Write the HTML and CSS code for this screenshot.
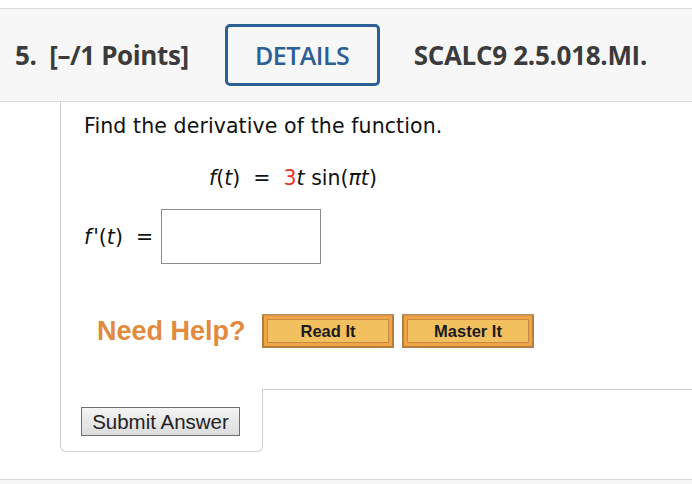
FILE: index.html
```html
<!DOCTYPE html>
<html>
<head>
<meta charset="utf-8">
<link rel="stylesheet" href="styles.css">
</head>
<body>
<div class="header">
  <span class="qnum">5.&nbsp; [–/1 Points]</span>
  <span class="details">DETAILS</span>
  <span class="code">SCALC9 2.5.018.MI.</span>
</div>
<div class="question">
  <div class="qbody">
    <p class="prompt">Find the derivative of the function.</p>
    <p class="formula"><i>f</i>(<i>t</i>) &nbsp;=&nbsp; <span class="red">3</span><i>t</i> sin(<i>πt</i>)</p>
    <div class="answer-row">
      <span class="lhs"><i>f</i><span class="prime">'</span>(<i>t</i>) &nbsp;=</span>
      <span class="answer-box"></span>
    </div>
    <div class="help-row">
      <span class="need-help">Need Help?</span>
      <span class="help-btn"><span class="help-inner">Read It</span></span>
      <span class="help-btn"><span class="help-inner">Master It</span></span>
    </div>
  </div>
  <div class="submit-row">
    <div class="submit-cell"><span class="submit-btn">Submit Answer</span></div>
    <div class="submit-rest"></div>
  </div>
</div>
<div class="footer"></div>
</body>
</html>
```
FILE: styles.css
```css
html, body { margin: 0; padding: 0; background: #fff; }
body { width: 692px; height: 484px; overflow: hidden; }
.header {
  margin-top: 8px;
  height: 92px;
  background: #f7f7f7;
  border-top: 1px solid #dcdcdc;
  border-bottom: 1px solid #dcdcdc;
  display: flex;
  align-items: center;
  padding-left: 15px;
  font-family: "Open Sans", sans-serif;
  font-weight: 700;
  font-size: 26px;
  color: #3b3b3b;
}
.qnum { letter-spacing: -0.4px; }
.details {
  margin-left: 36px;
  width: 149px;
  height: 56px;
  border: 3px solid #2c5f95;
  border-radius: 5px;
  color: #2c5f95;
  font-weight: 600;
  display: flex;
  align-items: center;
  justify-content: center;
  letter-spacing: -0.5px;
  font-size: 25px;
}
.code { margin-left: 34px; letter-spacing: -0.3px; }
.question { margin-left: 60px; }
.qbody {
  border-left: 1px solid #cfcfcf;
  height: 286px;
  padding-left: 23px;
  padding-top: 1px;
  font-family: "DejaVu Sans", Verdana, sans-serif;
  font-size: 20.5px;
  color: #111;
}
.prompt { margin: 11px 0 0 0; line-height: 24px; letter-spacing: 0.1px; }
.formula { margin: 28px 0 0 125px; line-height: 24px; }
.red { color: #e8322a; }
.answer-row { display: flex; align-items: center; margin-top: 19px; }
.lhs { width: 77px; line-height: 24px; }
.prime { font-style: italic; margin-left: 2px; }
.answer-box {
  width: 158px;
  height: 53px;
  border: 1px solid #8a8a8a;
  background: #fff;
}
.help-row { display: flex; align-items: center; margin-top: 50px; margin-left: 13px; }
.need-help {
  font-family: "Liberation Sans", Arial, sans-serif;
  font-weight: 700;
  font-size: 27px;
  color: #e28a3e;
  width: 165px;
}
.help-btn {
  border: 2px solid #b57d40;
  border-top-color: #c99055;
  background: #f0a545;
  padding: 3px;
  box-sizing: border-box;
  height: 34px;
  width: 132px;
  margin-right: 8px;
  display: flex;
}
.help-inner {
  flex: 1;
  border: 1px solid #c78a45;
  background: #f3c05f;
  font-family: "Liberation Sans", Arial, sans-serif;
  font-weight: 700;
  font-size: 16.5px;
  color: #1a1a1a;
  display: flex;
  align-items: center;
  justify-content: center;
}
.submit-row { display: flex; }
.submit-cell {
  width: 203px;
  border-left: 1px solid #cfcfcf;
  border-right: 1px solid #cfcfcf;
  border-bottom: 1px solid #cfcfcf;
  border-radius: 0 0 6px 6px;
  padding-left: 20px;
  padding-top: 18px;
  box-sizing: border-box;
  height: 63px;
}
.submit-btn {
  display: inline-flex;
  align-items: center;
  justify-content: center;
  width: 159px;
  height: 29px;
  box-sizing: border-box;
  border: 1px solid #6f6f6f;
  background: linear-gradient(#f4f4f4, #dcdcdc);
  font-family: "Liberation Sans", Arial, sans-serif;
  font-size: 20.5px;
  color: #222;
}
.submit-rest { flex: 1; border-top: 1px solid #cfcfcf; }
.footer {
  margin-top: 27px;
  border-top: 1px solid #dcdcdc;
  background: #f7f7f7;
  height: 10px;
}
```
